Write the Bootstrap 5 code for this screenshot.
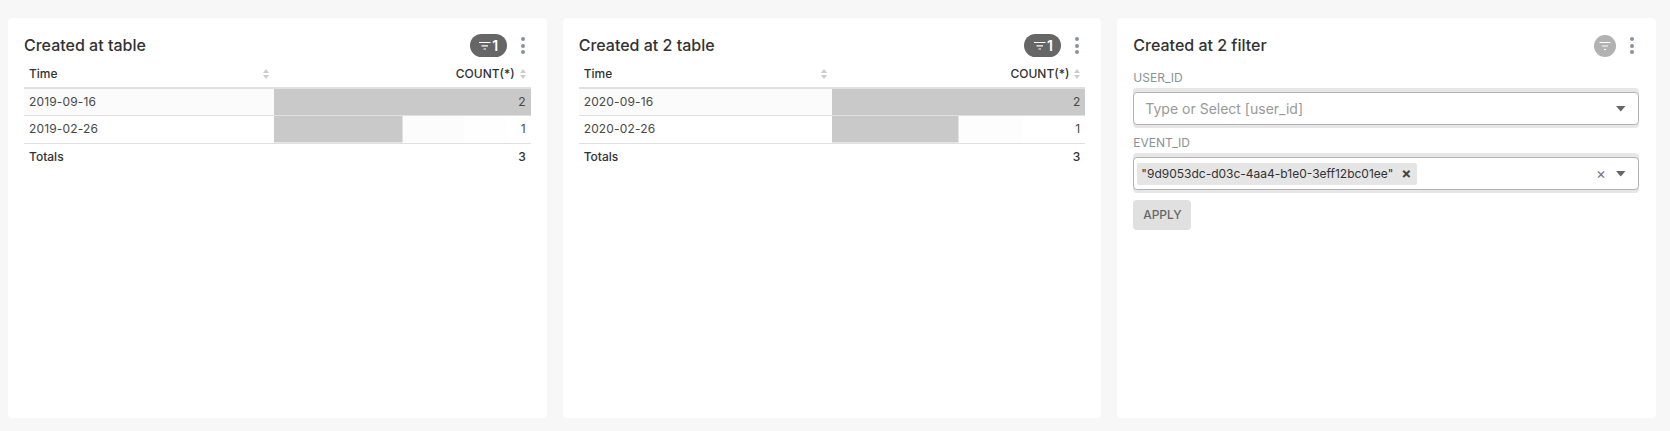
<!DOCTYPE html>
<html lang="en"><head><meta charset="utf-8"><title>Dashboard</title>
<link href="https://cdn.jsdelivr.net/npm/bootstrap@5.3.0/dist/css/bootstrap.min.css" rel="stylesheet">
<style>
html,body{height:431px;overflow:hidden}
body{background:#f7f7f7;font-family:Inter,"Liberation Sans",sans-serif;color:#323232}
.dash{height:431px;padding:18px 14px 13px 8px;gap:16px}
.panel{flex:1 1 0;min-width:0;background:#fff;border-radius:4px;padding:16px 16px}
.panel-title{font-size:16px;font-weight:500;line-height:22px;padding-bottom:2px;margin:0;color:#323232}
.head{height:23px;margin-bottom:3px}
.pill{height:23px;min-width:37px;border-radius:12px;background:#666;color:#fff;font-size:14px;font-weight:600;gap:0}
.pill-idle{min-width:0;width:22px;height:22px;background:#b2b2b2}
.kebab{width:4px;margin:0 6px 0 14px;gap:2.5px;flex-direction:column;display:flex}
.kebab i{display:block;width:4px;height:4px;border-radius:50%;background:#879399}
.tbl{font-size:12px;margin:0;table-layout:fixed;width:100%;color:#323232;--bs-table-bg:transparent}
.tbl>:not(caption)>*>*{padding:0 5px;vertical-align:middle;border-bottom:1px solid #e0e0e0;box-shadow:none}
.tbl thead th{font-weight:500;height:28px;border-bottom:2px solid #e0e0e0;padding:0 4px 0 5px}
.tbl tbody tr:nth-child(1) td{height:27px}
.tbl tbody tr:nth-child(2) td{height:28px}
.tbl tbody td{color:#484848;letter-spacing:.15px}
.tbl tfoot td{border-bottom:0;font-weight:500;height:27px}
.tbl tbody tr:first-child td:first-child{background:#fbfbfb}
.barcell{background-image:linear-gradient(#c9c9c9,#c9c9c9);background-repeat:no-repeat;background-position:left top;background-color:#fff;text-align:right}
.ghost-a{background-image:linear-gradient(#c9c9c9,#c9c9c9),linear-gradient(90deg,#fcfcfc 0 62px,#fefefe 62px 105px,#fff 105px);background-position:left top,128px top}
.ghost-b{background-image:linear-gradient(#c9c9c9,#c9c9c9),linear-gradient(#fdfdfd,#fdfdfd);background-position:left top,127px top}
.srt{display:block;flex:none}
.num{text-align:right}
.lbl{font-size:12px;color:#879399;line-height:16px;margin:13px 0 6px;font-weight:400;display:block}
.lbl-next{margin-top:10px}
.pick{height:33px;border:1px solid #b2b2b2;border-radius:4px;background:#fff;box-shadow:0 -4px 0 #e6e6e6,0 3px 0 #e6e6e6;padding:0 12px 0 3px;margin-right:1px}
.ph{font-size:14px;color:#999;padding-left:8px}
.tag{background:#e5e5e5;border-radius:2px;font-size:12px;height:22px;padding:0 6px 0 4px;gap:8px;color:#323232}
.tag b{font-size:15px;line-height:1;font-weight:700;color:#444}
.clr{font-size:15px;color:#777;margin-right:10px;line-height:1}
.go{background:#e0e0e0;color:#666;font-size:12px;font-weight:500;border:0;border-radius:4px;height:30px;width:58px;padding:0;margin-top:10px}
.go:hover{background:#e0e0e0;color:#666}
</style></head><body>
<div class="dash d-flex">

<section class="panel">
 <div class="head d-flex align-items-center justify-content-between">
  <h2 class="panel-title">Created at table</h2>
  <div class="d-flex align-items-center">
   <span class="pill d-inline-flex align-items-center justify-content-center"><svg width="14" height="12" viewBox="0 0 14 12"><path d="M1 2.5h11.5M3.5 5.8h6.5M5.5 9h2.5" stroke="#fff" stroke-width="1.2" fill="none"/></svg>1</span>
   <span class="kebab"><i></i><i></i><i></i></span>
  </div>
 </div>
 <table class="table tbl">
  <colgroup><col style="width:49.3%"><col></colgroup>
  <thead><tr><th><div class="d-flex justify-content-between align-items-center"><span>Time</span><svg class="srt" width="8" height="10" viewBox="0 0 8 10"><path d="M4 0l3 4H1zM4 10L1 6h6z" fill="#ccc"/></svg></div></th>
  <th class="num"><div class="d-flex justify-content-end align-items-center gap-1"><span>COUNT(*)</span><svg class="srt" width="8" height="10" viewBox="0 0 8 10"><path d="M4 0l3 4H1zM4 10L1 6h6z" fill="#ccc"/></svg></div></th></tr></thead>
  <tbody>
   <tr><td>2019-09-16</td><td class="barcell" style="background-size:100% 100%">2</td></tr>
   <tr><td>2019-02-26</td><td class="barcell ghost-a" style="background-size:50% 26.5px,105px 26.5px">1</td></tr>
  </tbody>
  <tfoot><tr><td>Totals</td><td class="num">3</td></tr></tfoot>
 </table>
</section>

<section class="panel">
 <div class="head d-flex align-items-center justify-content-between">
  <h2 class="panel-title">Created at 2 table</h2>
  <div class="d-flex align-items-center">
   <span class="pill d-inline-flex align-items-center justify-content-center"><svg width="14" height="12" viewBox="0 0 14 12"><path d="M1 2.5h11.5M3.5 5.8h6.5M5.5 9h2.5" stroke="#fff" stroke-width="1.2" fill="none"/></svg>1</span>
   <span class="kebab"><i></i><i></i><i></i></span>
  </div>
 </div>
 <table class="table tbl">
  <colgroup><col style="width:50%"><col></colgroup>
  <thead><tr><th><div class="d-flex justify-content-between align-items-center"><span>Time</span><svg class="srt" width="8" height="10" viewBox="0 0 8 10"><path d="M4 0l3 4H1zM4 10L1 6h6z" fill="#ccc"/></svg></div></th>
  <th class="num"><div class="d-flex justify-content-end align-items-center gap-1"><span>COUNT(*)</span><svg class="srt" width="8" height="10" viewBox="0 0 8 10"><path d="M4 0l3 4H1zM4 10L1 6h6z" fill="#ccc"/></svg></div></th></tr></thead>
  <tbody>
   <tr><td>2020-09-16</td><td class="barcell" style="background-size:100% 100%">2</td></tr>
   <tr><td>2020-02-26</td><td class="barcell ghost-b" style="background-size:50% 26.5px,64px 26.5px">1</td></tr>
  </tbody>
  <tfoot><tr><td>Totals</td><td class="num">3</td></tr></tfoot>
 </table>
</section>

<section class="panel">
 <div class="head d-flex align-items-center justify-content-between">
  <h2 class="panel-title">Created at 2 filter</h2>
  <div class="d-flex align-items-center">
   <span class="pill pill-idle d-inline-flex align-items-center justify-content-center"><svg width="14" height="12" viewBox="0 0 14 12"><path d="M1.5 2.5h11M4 6h6M6 9.5h2" stroke="#fff" stroke-width="1.2" fill="none"/></svg></span>
   <span class="kebab"><i></i><i></i><i></i></span>
  </div>
 </div>
 <label class="lbl">USER_ID</label>
 <div class="pick d-flex align-items-center justify-content-between">
  <span class="ph">Type or Select [user_id]</span>
  <svg width="10" height="6" viewBox="0 0 10 6"><path d="M0 0h9.5L4.75 5.5z" fill="#666"/></svg>
 </div>
 <label class="lbl lbl-next">EVENT_ID</label>
 <div class="pick d-flex align-items-center justify-content-between">
  <span class="tag d-inline-flex align-items-center"><span>"9d9053dc-d03c-4aa4-b1e0-3eff12bc01ee"</span><b>×</b></span>
  <span class="d-flex align-items-center"><span class="clr">×</span><svg width="10" height="6" viewBox="0 0 10 6"><path d="M0 0h9.5L4.75 5.5z" fill="#666"/></svg></span>
 </div>
 <button class="btn go" type="button">APPLY</button>
</section>

</div>
<script src="https://cdn.jsdelivr.net/npm/bootstrap@5.3.0/dist/js/bootstrap.bundle.min.js"></script>
</body></html>
